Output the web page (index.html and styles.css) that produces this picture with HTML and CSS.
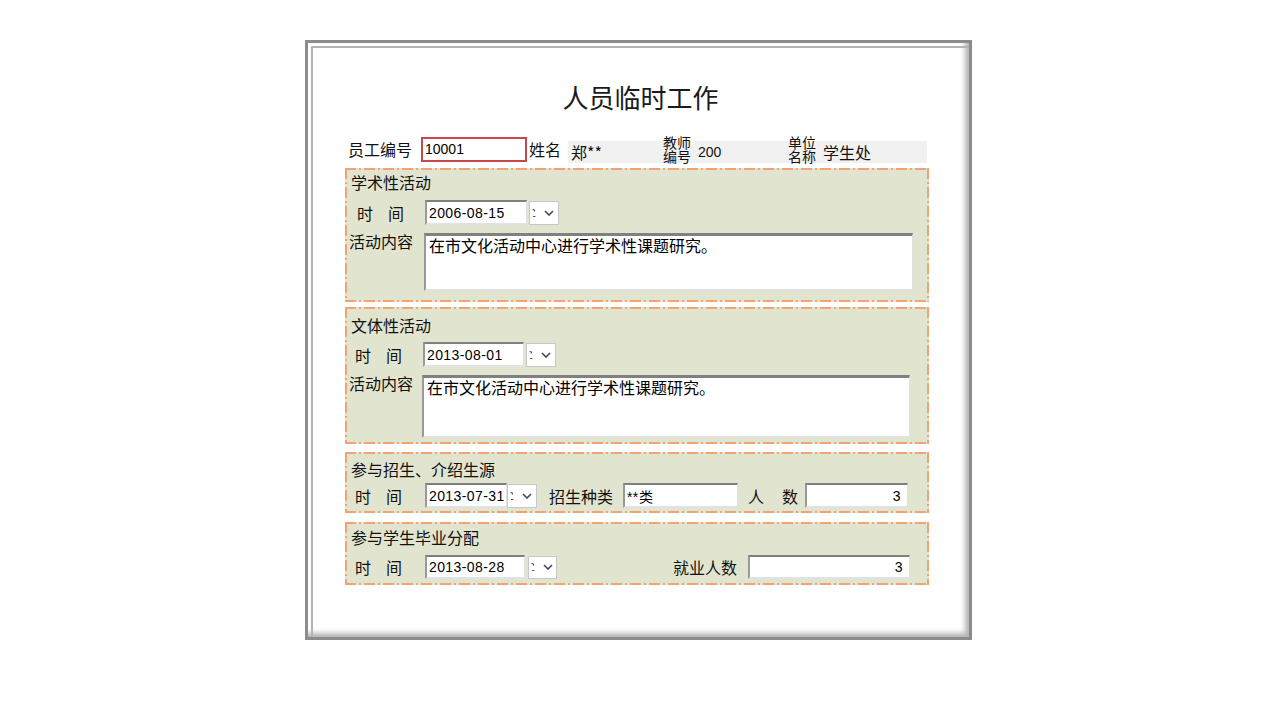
FILE: index.html
```html
<!DOCTYPE html>
<html lang="zh-CN">
<head>
<meta charset="utf-8">
<title>人员临时工作</title>
<link rel="stylesheet" href="styles.css">
</head>
<body>
<div class="window">
  <div class="inner">
    <h1 class="title">人员临时工作</h1>

    <div class="info">
      <span class="lbl lbl-id">员工编号</span>
      <div class="field field-id">10001</div>
      <span class="lbl lbl-name">姓名</span>
      <div class="band">
        <span class="val val-name">郑**</span>
        <span class="stack"><span>教师</span><span>编号</span></span>
        <span class="val val-no">200</span>
        <span class="stack"><span>单位</span><span>名称</span></span>
        <span class="val">学生处</span>
      </div>
    </div>

    <section class="group g1">
      <div class="gtitle">学术性活动</div>
      <div class="row">
        <span class="tlabel tlabel-1"><span>时</span><span>间</span></span>
        <div class="field date">2006-08-15</div>
        <div class="sel"><svg class="cut" width="4" height="10" viewBox="0 0 4 10"><path d="M0.5 2 Q3 1 2.5 3.5 M1 8.5 L3.5 8.5" stroke="#555" stroke-width="1.2" fill="none"/></svg><svg width="10" height="6" viewBox="0 0 10 6"><path d="M1 1 L5 5 L9 1" stroke="#3b4a62" stroke-width="1.6" fill="none"/></svg></div>
      </div>
      <div class="row row-top">
        <span class="clabel">活动内容</span>
        <div class="field area area-1">在市文化活动中心进行学术性课题研究。</div>
      </div>
    </section>

    <section class="group g2">
      <div class="gtitle">文体性活动</div>
      <div class="row">
        <span class="tlabel"><span>时</span><span>间</span></span>
        <div class="field date date-2">2013-08-01</div>
        <div class="sel"><svg class="cut" width="4" height="10" viewBox="0 0 4 10"><path d="M0.5 2 Q3 1 2.5 3.5 M1 8.5 L3.5 8.5" stroke="#555" stroke-width="1.2" fill="none"/></svg><svg width="10" height="6" viewBox="0 0 10 6"><path d="M1 1 L5 5 L9 1" stroke="#3b4a62" stroke-width="1.6" fill="none"/></svg></div>
      </div>
      <div class="row row-top">
        <span class="clabel">活动内容</span>
        <div class="field area area-2">在市文化活动中心进行学术性课题研究。</div>
      </div>
    </section>

    <section class="group g3">
      <div class="gtitle">参与招生、介绍生源</div>
      <div class="row">
        <span class="tlabel"><span>时</span><span>间</span></span>
        <div class="field date date-3">2013-07-31</div>
        <div class="sel sel-3"><svg class="cut" width="4" height="10" viewBox="0 0 4 10"><path d="M0.5 2 Q3 1 2.5 3.5 M1 8.5 L3.5 8.5" stroke="#555" stroke-width="1.2" fill="none"/></svg><svg width="10" height="6" viewBox="0 0 10 6"><path d="M1 1 L5 5 L9 1" stroke="#3b4a62" stroke-width="1.6" fill="none"/></svg></div>
        <span class="lbl lbl-kind">招生种类</span>
        <div class="field kind">**类</div>
        <span class="tlabel tlabel-num"><span>人</span><span>数</span></span>
        <div class="field num num-3">3</div>
      </div>
    </section>

    <section class="group g4">
      <div class="gtitle">参与学生毕业分配</div>
      <div class="row">
        <span class="tlabel"><span>时</span><span>间</span></span>
        <div class="field date date-4">2013-08-28</div>
        <div class="sel sel-4"><svg class="cut" width="4" height="10" viewBox="0 0 4 10"><path d="M0.5 2 Q3 1 2.5 3.5 M1 8.5 L3.5 8.5" stroke="#555" stroke-width="1.2" fill="none"/></svg><svg width="10" height="6" viewBox="0 0 10 6"><path d="M1 1 L5 5 L9 1" stroke="#3b4a62" stroke-width="1.6" fill="none"/></svg></div>
        <span class="lbl lbl-job">就业人数</span>
        <div class="field num num-4">3</div>
      </div>
    </section>
  </div>
</div>
</body>
</html>
```

FILE: styles.css
```css
* { box-sizing: border-box; }

body {
  margin: 0;
  background: #ffffff;
  font-family: "Noto Sans CJK SC", "Noto Sans", sans-serif;
  color: #111;
  font-size: 16px;
}

.window {
  margin: 40px 0 0 305px;
  width: 667px;
  height: 600px;
  border: 3px solid #8c8c8c;
  padding: 3px 0 0 3px;
  background: #fff;
  box-shadow: inset -5px -5px 5px -1px rgba(120,120,120,0.55);
}

.inner {
  height: 100%;
  border-top: 2px solid #b3b3b3;
  border-left: 2px solid #b3b3b3;
  padding: 0 35px 0 32px;
}

.title {
  margin: 32px 0 0 0;
  font-size: 26px;
  line-height: 34px;
  font-weight: 400;
  text-align: center;
  color: #1a1a1a;
  padding-left: 2px;
}

.info {
  margin-top: 21px;
  height: 28px;
  display: flex;
  align-items: center;
  width: 584px;
}

.lbl {
  line-height: 20px;
  white-space: nowrap;
}
.lbl-id { margin-left: 3px; }
.lbl-name { margin-left: 2px; }

.field {
  background: #fff;
  border-top: 2px solid #7f7f7f;
  border-left: 2px solid #999;
  border-right: 1px solid #e2e2e2;
  border-bottom: 2px solid #e2e2e2;
  font-family: "Liberation Sans", Arial, sans-serif;
  font-size: 14px;
  letter-spacing: 0.4px;
  color: #000;
  display: flex;
  align-items: center;
  padding-left: 2px;
  white-space: nowrap;
  overflow: hidden;
}

.field-id {
  margin-left: 9px;
  width: 106px;
  height: 25px;
  border: 2px solid #c9484c;
  padding-left: 2px;
  letter-spacing: 0;
}

.band {
  margin-left: 7px;
  margin-right: 2px;
  flex: 1;
  height: 22px;
  margin-top: 5px;
  background: #f1f1f1;
  display: flex;
  align-items: center;
}
.val { line-height: 20px; white-space: nowrap; }
.val-name {
  width: 95px;
  padding-left: 3px;
}
.val-no {
  width: 90px;
  font-family: "Liberation Sans", Arial, sans-serif;
  font-size: 14px;
}
.stack {
  width: 35px;
  display: flex;
  flex-direction: column;
  font-size: 14px;
  line-height: 14px;
  margin-top: -5px;
}

.group {
  width: 584px;
  padding-left: 6px;
  background:
    repeating-linear-gradient(90deg, #f0a472 0 11px, transparent 11px 14px, #f0a472 14px 16px, transparent 16px 19px) left top / 100% 2px no-repeat,
    repeating-linear-gradient(90deg, #f0a472 0 11px, transparent 11px 14px, #f0a472 14px 16px, transparent 16px 19px) left bottom / 100% 2px no-repeat,
    repeating-linear-gradient(180deg, #f0a472 0 11px, transparent 11px 14px, #f0a472 14px 16px, transparent 16px 19px) left top / 2px 100% no-repeat,
    repeating-linear-gradient(180deg, #f0a472 0 11px, transparent 11px 14px, #f0a472 14px 16px, transparent 16px 19px) right top / 2px 100% no-repeat,
    #e1e4cf;
}

.g1 { margin-top: 5px; padding-top: 4px; padding-bottom: 11px; }
.g2 { margin-top: 5px; padding-top: 8px; padding-bottom: 6px; }
.g3 { margin-top: 8px; padding-top: 7px; padding-bottom: 5px; }
.g4 { margin-top: 9px; padding-top: 5px; padding-bottom: 6px; }

.gtitle {
  line-height: 20px;
  height: 20px;
}

.row {
  display: flex;
  align-items: center;
  margin-top: 8px;
}
.g2 .row { margin-top: 7px; }
.g2 .row-top { margin-top: 8px; }
.g3 .row { margin-top: 4px; }
.g4 .row { margin-top: 8px; }
.row-top { align-items: flex-start; }

.tlabel {
  width: 74px;
  display: flex;
  gap: 15px;
  padding-left: 4px;
  line-height: 20px;
}
.tlabel-1 { padding-left: 6px; }

.date { width: 102px; height: 25px; }
.date-2 { margin-left: -2px; width: 101px; }
.date-3 { width: 82px; }
.date-4 { width: 100px; height: 24px; }

.sel {
  margin-left: 2px;
  width: 30px;
  height: 24px;
  background: #fff;
  border: 1px solid #c8c8c8;
  display: flex;
  align-items: center;
  gap: 8px;
  padding-left: 2px;
  overflow: hidden;
}
.sel-3 { margin-left: 0; }
.sel-4 { margin-left: 3px; width: 29px; height: 23px; }
.cut { flex: none; }

.clabel {
  margin-left: -2px;
  margin-top: -2px;
  width: 75px;
  line-height: 20px;
}

.area {
  align-items: flex-start;
  font-family: "Noto Sans CJK SC", sans-serif;
  font-size: 16px;
  letter-spacing: 0;
  padding: 1px 0 0 3px;
  line-height: 16px;
  border-top: 3px solid #808080;
}
.area-1 { width: 489px; height: 58px; }
.area-2 { width: 488px; height: 63px; margin-left: -2px; }

.lbl-kind { margin-left: 12px; }
.kind { margin-left: 10px; width: 115px; height: 25px; }
.tlabel-num { width: auto; margin-left: 10px; gap: 18px; padding-left: 0; }
.num {
  justify-content: flex-end;
  padding-right: 6px;
}
.num-3 { margin-left: 7px; width: 103px; height: 25px; }
.lbl-job { margin-left: 116px; }
.num-4 { margin-left: 11px; width: 162px; height: 24px; }
```
